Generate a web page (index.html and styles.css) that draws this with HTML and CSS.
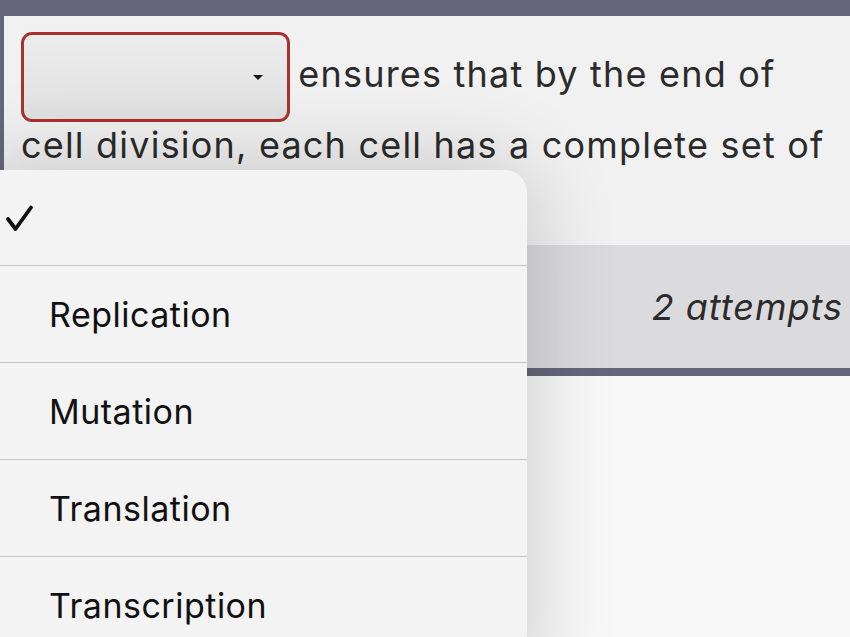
FILE: index.html
```html
<!DOCTYPE html>
<html lang="en">
<head>
    <meta charset="UTF-8">
    <meta name="viewport" content="width=device-width, initial-scale=1.0">
    <title>Fill in the blank</title>
    <link rel="stylesheet" href="styles.css">
</head>
<body>
    <div class="question">
        <div class="question-body">
            <span class="blank"><span class="blank-arrow"></span></span> ensures that by the end of
            cell division, each cell has a complete set of chromosomes.
        </div>
        <div class="question-footer">
            <span class="attempts">2 attempts</span>
        </div>
    </div>
    <ul class="picker">
        <li class="picker-item selected">
            <svg class="check" width="34" height="30" viewBox="0 0 34 30">
                <path d="M8 16 L15.5 26 L31 4.5" fill="none" stroke="#111" stroke-width="3.8" stroke-linecap="round" stroke-linejoin="round"/>
            </svg>
        </li>
        <li class="picker-item">Replication</li>
        <li class="picker-item">Mutation</li>
        <li class="picker-item">Translation</li>
        <li class="picker-item">Transcription</li>
    </ul>
</body>
</html>
```

FILE: styles.css
```css
body {
    margin: 0;
    background: #f8f8f8;
    font-family: Inter, "Noto Sans", sans-serif;
    overflow: hidden;
}
.question {
    border-top: 16px solid #66667a;
    border-left: 4px solid #66667a;
    border-bottom: 8px solid #66667a;
    background: #f1f1f1;
}
.question-body {
    padding: 16px 17px 29px 17px;
    font-size: 36px;
    line-height: 47px;
    letter-spacing: 1.2px;
    color: #2b2b2b;
}
.blank {
    display: inline-block;
    position: relative;
    box-sizing: border-box;
    width: 269px;
    height: 90px;
    margin-right: -3px;
    vertical-align: middle;
    border: 3px solid #a93131;
    border-radius: 11px;
    background: linear-gradient(#ececec, #e1e1e1);
}
.blank-arrow {
    position: absolute;
    right: 24px;
    top: 40px;
    width: 0;
    height: 0;
    border-left: 5px solid transparent;
    border-right: 5px solid transparent;
    border-top: 5px solid #111;
}
.question-footer {
    height: 123px;
    display: flex;
    align-items: center;
    justify-content: flex-end;
    padding-right: 7px;
    background: #dbdbde;
}
.attempts {
    font-size: 36px;
    font-style: italic;
    letter-spacing: 1px;
    color: #2b2b2b;
}
.picker {
    position: absolute;
    top: 170px;
    left: -30px;
    width: 557px;
    height: 520px;
    margin: 0;
    padding: 0;
    list-style: none;
    background: #f3f3f3;
    border-radius: 22px 22px 0 0;
    box-shadow: 0 0 90px rgba(0, 0, 0, 0.2);
}
.picker-item {
    display: flex;
    align-items: center;
    height: 96px;
    padding-left: 79px;
    border-top: 1px solid #c4c4c6;
    font-size: 34px;
    letter-spacing: 0.5px;
    color: #111;
}
.picker-item.selected {
    height: 95px;
    padding-left: 30px;
    border-top: none;
}
```
